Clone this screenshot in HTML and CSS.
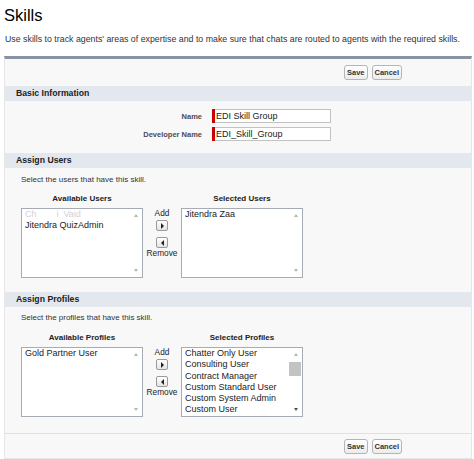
FILE: index.html
```html
<!DOCTYPE html>
<html lang="en">
<head>
    <meta charset="UTF-8">
    <meta name="viewport" content="width=device-width, initial-scale=1.0">
    <title>Skills</title>
    <link rel="stylesheet" href="styles.css">
</head>
<body>
    <h1 class="page-title">Skills</h1>
    <p class="page-desc">Use skills to track agents' areas of expertise and to make sure that chats are routed to agents with the required skills.</p>

    <div class="panel">
        <div class="button-row">
            <button class="btn">Save</button>
            <button class="btn">Cancel</button>
        </div>

        <div class="section-header">Basic Information</div>
        <div class="section-body basic">
            <div class="field-row">
                <label class="field-label">Name</label>
                <div class="required-input"><input type="text" value="EDI Skill Group"></div>
            </div>
            <div class="field-row">
                <label class="field-label">Developer Name</label>
                <div class="required-input"><input type="text" value="EDI_Skill_Group"></div>
            </div>
        </div>

        <div class="section-header">Assign Users</div>
        <div class="section-body users">
            <p class="hint">Select the users that have this skill.</p>
            <div class="picklist">
                <div class="pick-label left">Available Users</div>
                <div class="pick-label right">Selected Users</div>
                <div class="listbox left">
                    <div class="options">
                        <div class="option hidden-name">Ch&nbsp; &nbsp; &nbsp; &nbsp; i&nbsp; Vaid</div>
                        <div class="option">Jitendra QuizAdmin</div>
                    </div>
                    <div class="scrollbar">
                        <div class="scroll-up"></div>
                        <div class="scroll-fill"></div>
                        <div class="scroll-down"></div>
                    </div>
                </div>
                <div class="controls">
                    <span>Add</span>
                    <button class="move-btn"><span class="arrow-right"></span></button>
                    <button class="move-btn"><span class="arrow-left"></span></button>
                    <span>Remove</span>
                </div>
                <div class="listbox right">
                    <div class="options">
                        <div class="option">Jitendra Zaa</div>
                    </div>
                    <div class="scrollbar">
                        <div class="scroll-up"></div>
                        <div class="scroll-fill"></div>
                        <div class="scroll-down"></div>
                    </div>
                </div>
            </div>
        </div>

        <div class="section-header">Assign Profiles</div>
        <div class="section-body profiles">
            <p class="hint">Select the profiles that have this skill.</p>
            <div class="picklist">
                <div class="pick-label left">Available Profiles</div>
                <div class="pick-label right">Selected Profiles</div>
                <div class="listbox left">
                    <div class="options">
                        <div class="option">Gold Partner User</div>
                    </div>
                    <div class="scrollbar">
                        <div class="scroll-up"></div>
                        <div class="scroll-fill"></div>
                        <div class="scroll-down"></div>
                    </div>
                </div>
                <div class="controls">
                    <span>Add</span>
                    <button class="move-btn"><span class="arrow-right"></span></button>
                    <button class="move-btn"><span class="arrow-left"></span></button>
                    <span>Remove</span>
                </div>
                <div class="listbox right">
                    <div class="options">
                        <div class="option">Chatter Only User</div>
                        <div class="option">Consulting User</div>
                        <div class="option">Contract Manager</div>
                        <div class="option">Custom Standard User</div>
                        <div class="option">Custom System Admin</div>
                        <div class="option">Custom User</div>
                    </div>
                    <div class="scrollbar">
                        <div class="scroll-up"></div>
                        <div class="scroll-thumb"></div>
                        <div class="scroll-fill"></div>
                        <div class="scroll-down active"></div>
                    </div>
                </div>
            </div>
        </div>

        <div class="button-row footer">
            <button class="btn">Save</button>
            <button class="btn">Cancel</button>
        </div>
    </div>
</body>
</html>
```

FILE: styles.css
```css
body {
    margin: 0;
    font-family: "Liberation Sans", Arial, sans-serif;
    color: #222;
    background-color: #fff;
}

.page-title {
    margin: 0;
    padding: 4px 0 0 4px;
    font-size: 16.5px;
    font-weight: normal;
    line-height: 22px;
    color: #000;
}

.page-desc {
    margin: 0;
    padding-left: 5px;
    font-size: 8.8px;
    line-height: 26px;
    color: #333;
}

.panel {
    width: 468px;
    margin: 4px 0 0 4px;
    box-sizing: border-box;
    background-color: #f8f8f8;
    border: 1px solid #e6e6e6;
    border-top: 3px solid #8a93a3;
}

.button-row {
    display: flex;
    align-items: center;
    gap: 4px;
    height: 27px;
    padding-left: 339px;
}

.button-row.footer {
    height: 24px;
    border-top: 1px solid #e0e0e0;
}

.btn {
    height: 15px;
    padding: 0 2px;
    font-family: inherit;
    font-size: 7.5px;
    font-weight: bold;
    color: #333;
    background: linear-gradient(#ffffff, #ececec);
    border: 1px solid #b5b5b5;
    border-radius: 3px;
}

.section-header {
    height: 15px;
    padding-left: 11px;
    line-height: 15px;
    font-size: 8.7px;
    font-weight: bold;
    color: #222;
    background-color: #e3e7ee;
}

.section-body.basic {
    display: flex;
    flex-direction: column;
    gap: 4px;
    padding: 8px 0 12px;
}

.field-row {
    display: flex;
    align-items: center;
    height: 14px;
}

.field-label {
    width: 207px;
    padding-right: 10px;
    box-sizing: border-box;
    text-align: right;
    font-size: 7.5px;
    font-weight: bold;
    color: #4a4a56;
}

.required-input {
    display: flex;
    border-left: 3px solid #c00;
}

.required-input input {
    width: 116px;
    height: 14px;
    box-sizing: border-box;
    margin: 0;
    padding: 0 1px;
    font-family: inherit;
    font-size: 9px;
    color: #222;
    background-color: #fff;
    border: 1px solid #c2c2c2;
    border-left: none;
}

.section-body.users {
    padding: 6px 0 14px 16px;
}

.section-body.profiles {
    padding: 5px 0 16px 16px;
}

.hint {
    margin: 0;
    font-size: 8px;
    line-height: 12px;
    color: #333;
}

.picklist {
    display: grid;
    grid-template-columns: 122px 38px 122px;
    grid-template-rows: 12px 70px;
    row-gap: 3px;
    margin-top: 7px;
}

.profiles .picklist {
    margin-top: 8px;
}

.pick-label {
    grid-row: 1;
    text-align: center;
    font-size: 8px;
    font-weight: bold;
    line-height: 12px;
    color: #222;
}

.pick-label.left,
.listbox.left {
    grid-column: 1;
}

.pick-label.right,
.listbox.right {
    grid-column: 3;
}

.listbox {
    grid-row: 2;
    display: flex;
    box-sizing: border-box;
    background-color: #fff;
    border: 1px solid #a5acb5;
}

.options {
    flex: 1;
    padding: 0 3px;
    overflow: hidden;
    font-size: 9px;
    line-height: 11.3px;
    color: #222;
}

.option {
    white-space: nowrap;
}

.hidden-name {
    color: #d2d2d2;
}

.scrollbar {
    display: flex;
    flex-direction: column;
    width: 13px;
}

.scroll-up,
.scroll-down {
    display: flex;
    align-items: center;
    justify-content: center;
    height: 13px;
}

.scroll-up::before {
    content: "";
    border-left: 2px solid transparent;
    border-right: 2px solid transparent;
    border-bottom: 3px solid #b4b4b4;
}

.scroll-down::before {
    content: "";
    border-left: 2px solid transparent;
    border-right: 2px solid transparent;
    border-top: 3px solid #b4b4b4;
}

.scroll-down.active::before {
    border-top-color: #505050;
}

.scroll-thumb {
    width: 12px;
    height: 14px;
    margin-top: 1px;
    background-color: #c3c3c3;
}

.scroll-fill {
    flex: 1;
}

.controls {
    grid-column: 2;
    grid-row: 2;
    display: flex;
    flex-direction: column;
    align-items: center;
    font-size: 8.3px;
    line-height: 10px;
    color: #222;
}

.move-btn {
    display: flex;
    align-items: center;
    justify-content: center;
    width: 12px;
    height: 11px;
    margin-top: 2px;
    padding: 0;
    background: linear-gradient(#ffffff, #e4e4e4);
    border: 1px solid #9a9a9a;
    border-radius: 2px;
}

.move-btn + .move-btn {
    margin-top: 6px;
}

.arrow-right {
    border-top: 3px solid transparent;
    border-bottom: 3px solid transparent;
    border-left: 3px solid #222;
}

.arrow-left {
    border-top: 3px solid transparent;
    border-bottom: 3px solid transparent;
    border-right: 3px solid #222;
}
```
